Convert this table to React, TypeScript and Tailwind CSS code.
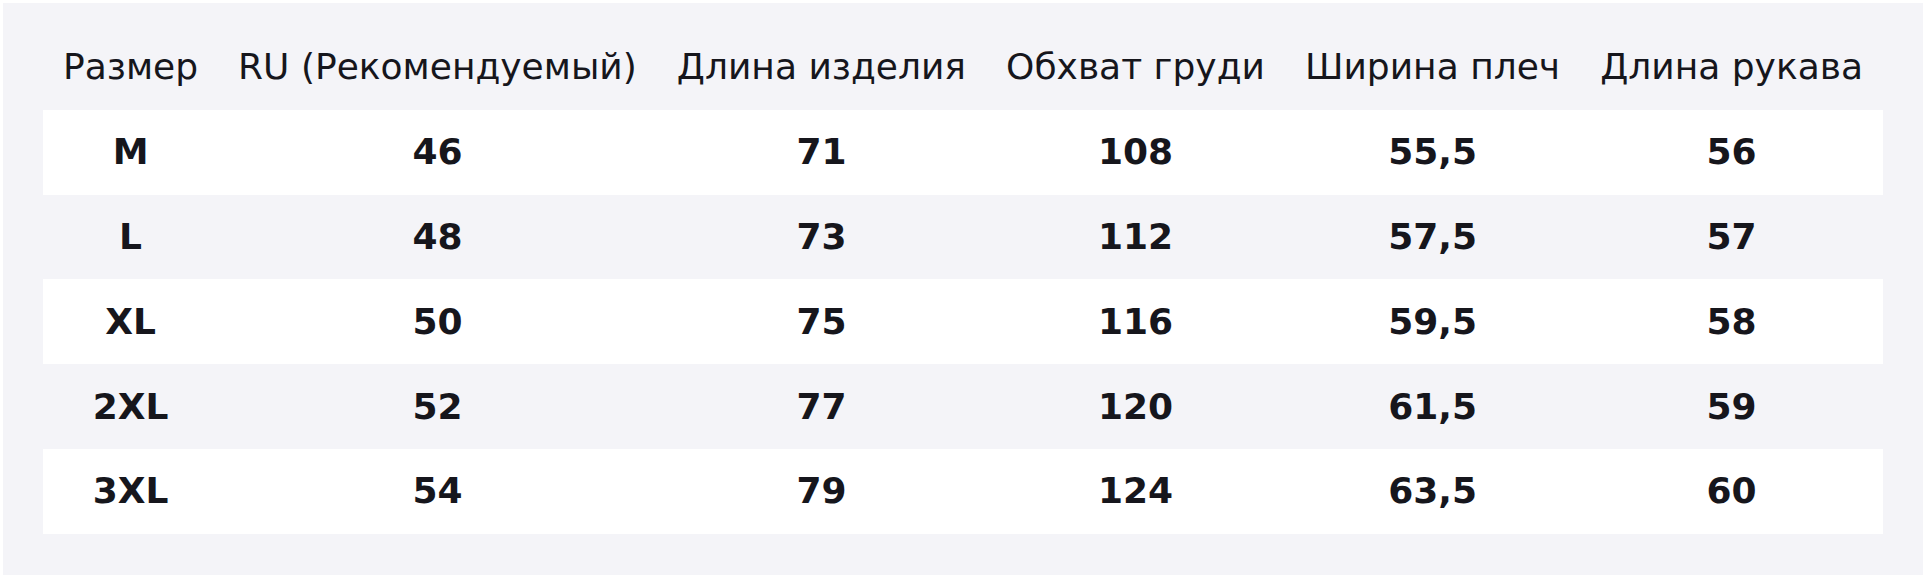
const headers = ['Размер', 'RU (Рекомендуемый)', 'Длина изделия', 'Обхват груди', 'Ширина плеч', 'Длина рукава']

const rows = [
  ['M', '46', '71', '108', '55,5', '56'],
  ['L', '48', '73', '112', '57,5', '57'],
  ['XL', '50', '75', '116', '59,5', '58'],
  ['2XL', '52', '77', '120', '61,5', '59'],
  ['3XL', '54', '79', '124', '63,5', '60'],
]

export default function App() {
  return (
    <div className="w-[1926px] h-[578px] bg-white p-[3px]" style={{ fontFamily: '"DejaVu Sans", Verdana, sans-serif' }}>
      <div className="h-full bg-[#f4f4f8] px-[40px] pt-[21px] text-[#16161c]">
        <table className="w-full border-collapse text-[36px] leading-[1.16]">
          <thead>
            <tr>
              {headers.map((h) => (
                <th key={h} className="px-[20px] py-[22px] font-normal text-center whitespace-nowrap">
                  {h}
                </th>
              ))}
            </tr>
          </thead>
          <tbody>
            {rows.map((r, i) => (
              <tr key={r[0]} className={i % 2 === 0 ? 'bg-white' : ''}>
                {r.map((v, j) => (
                  <td key={j} className="px-[20px] py-[21.5px] font-bold text-center whitespace-nowrap">
                    {v}
                  </td>
                ))}
              </tr>
            ))}
          </tbody>
        </table>
      </div>
    </div>
  )
}
